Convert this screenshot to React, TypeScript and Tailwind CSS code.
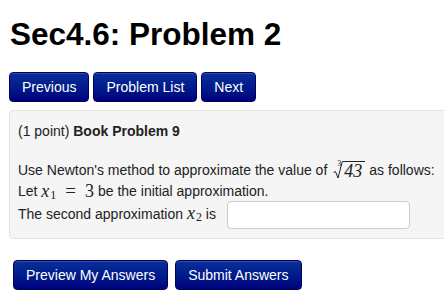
import React from "react";

const btn =
  "h-[30px] px-[12px] rounded-[4px] border border-[#00005e] bg-gradient-to-b from-[#0b2e9a] to-[#00007d] text-white text-[14px] leading-none shadow-[inset_0_1px_0_rgba(255,255,255,0.15)]";

function MathVar({ name, sub }: { name: string; sub: string }) {
  return (
    <span className="font-['Liberation_Serif',serif] italic text-[18px]">
      {name}
      <sub className="not-italic text-[12px] relative top-[2px] align-baseline ml-[1px]">{sub}</sub>
    </span>
  );
}

function CubeRoot() {
  return (
    <span className="inline-flex items-end ml-[6px] mr-[3px] align-[-4px]">
      <span className="relative inline-block w-[10px] h-[18px]">
        <span className="absolute left-[4px] -top-[1px] text-[8px] leading-none font-['Liberation_Serif',serif]">
          3
        </span>
        <svg width="10" height="18" viewBox="0 0 10 18" className="block">
          <path d="M0.5 11.5 L2.5 10.5 L5 17 L9.3 0.6 L10 0.6" fill="none" stroke="#222" strokeWidth="1" />
        </svg>
      </span>
      <span className="border-t border-[#222] h-[18px] pl-[1px] pr-[3px] pt-[1px] leading-[16px] font-['Liberation_Serif',serif] italic text-[18px]">
        43
      </span>
    </span>
  );
}

export default function App() {
  return (
    <div className="w-full h-[298px] overflow-hidden bg-white font-['Liberation_Sans',Arial,sans-serif] text-[#222]">
      <div className="pl-[9px]">
        <h1 className="pt-[18px] pl-[1px] text-[31.5px] font-bold leading-[32px] text-black">
          Sec4.6: Problem 2
        </h1>
        <div className="mt-[22px] flex gap-1">
          <button type="button" className={btn}>Previous</button>
          <button type="button" className={btn}>Problem List</button>
          <button type="button" className={btn}>Next</button>
        </div>
        <div className="mt-[8px] w-[460px] rounded-[4px] border border-[#e3e3e3] bg-[#f5f5f5] pt-[10px] pb-[9px] px-[8px] text-[14px] leading-[20px]">
          <div>
            (1 point) <b>Book Problem 9</b>
          </div>
          <div className="h-[18px]" />
          <div className="h-[21px] flex items-center whitespace-nowrap">
            <span>Use Newton's method to approximate the value of</span>
            <CubeRoot />
            <span className="ml-[1px]">as follows:</span>
          </div>
          <div className="h-[21px] flex items-center whitespace-nowrap">
            <span>Let&nbsp;</span>
            <MathVar name="x" sub="1" />
            <span className="mx-[9px] font-['Liberation_Serif',serif] text-[19px]">=</span>
            <span className="font-['Liberation_Serif',serif] text-[18px]">3</span>
            <span>&nbsp;be the initial approximation.</span>
          </div>
          <div className="flex items-center whitespace-nowrap">
            <span className="pb-[4px]">
              The second approximation <MathVar name="x" sub="2" /> is
            </span>
            <input
              type="text"
              className="ml-[11px] w-[183px] h-[28px] rounded-[4px] border border-[#cccccc] bg-white"
            />
          </div>
        </div>
        <div className="mt-[21px] ml-[4px] flex gap-[7px]">
          <button type="button" className={btn}>Preview My Answers</button>
          <button type="button" className={btn}>Submit Answers</button>
        </div>
      </div>
    </div>
  );
}
